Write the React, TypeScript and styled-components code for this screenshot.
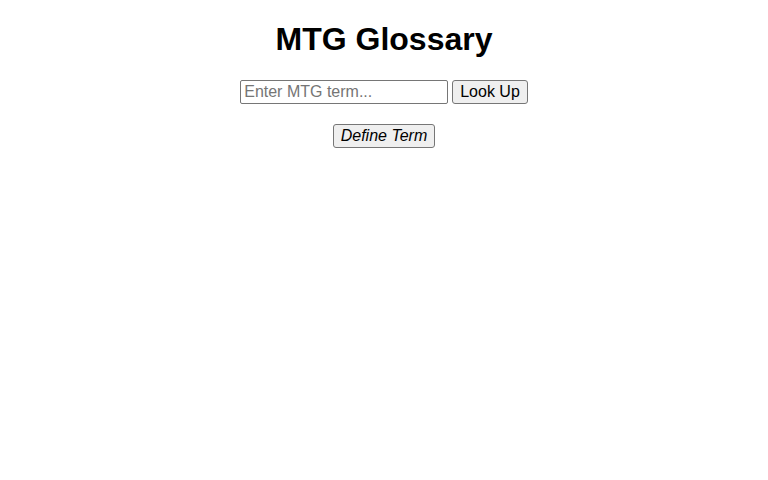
import React, {useState} from "react";
import styled, {createGlobalStyle} from "styled-components";

const GlobalStyle = createGlobalStyle`
  body {
    margin: 0;
    background: #ffffff;
    font-family: "Liberation Sans", Arial, sans-serif;
    color: #000000;
  }
`;

const Page = styled.div`
  display: flex;
  flex-direction: column;
  align-items: center;
`;

const Title = styled.h1`
  font-size: 32px;
  font-weight: bold;
  margin: 21px 0 22px;
  line-height: 37px;
`;

const SearchRow = styled.div`
  display: flex;
  align-items: center;
  gap: 4px;
`;

const TermInput = styled.input`
  box-sizing: border-box;
  width: 208px;
  height: 24px;
  padding: 1px 3px;
  border: 1px solid #767676;
  border-radius: 2px;
  font-family: "Liberation Sans", Arial, sans-serif;
  font-size: 16px;
  color: #000;

  &::placeholder {
    color: #757575;
  }
`;

const Button = styled.button<{ $italic?: boolean }>`
  box-sizing: border-box;
  height: 24px;
  padding: 1px 7px;
  border: 1px solid #767676;
  border-radius: 3px;
  background: #efefef;
  font-family: "Liberation Sans", Arial, sans-serif;
  font-size: 16px;
  font-style: ${p => (p.$italic ? "italic" : "normal")};
  color: #000;
  cursor: pointer;
`;

const DefineRow = styled.div`
  margin-top: 20px;
`;

const App: React.FunctionComponent = () => {
    const [term, setTerm] = useState('');

    return (
        <Page>
            <GlobalStyle/>
            <Title>MTG Glossary</Title>
            <SearchRow>
                <TermInput
                    placeholder="Enter MTG term..."
                    value={term}
                    onChange={e => setTerm(e.target.value)}
                />
                <Button>Look Up</Button>
            </SearchRow>
            <DefineRow>
                <Button $italic>Define Term</Button>
            </DefineRow>
        </Page>
    );
};

export default App;
